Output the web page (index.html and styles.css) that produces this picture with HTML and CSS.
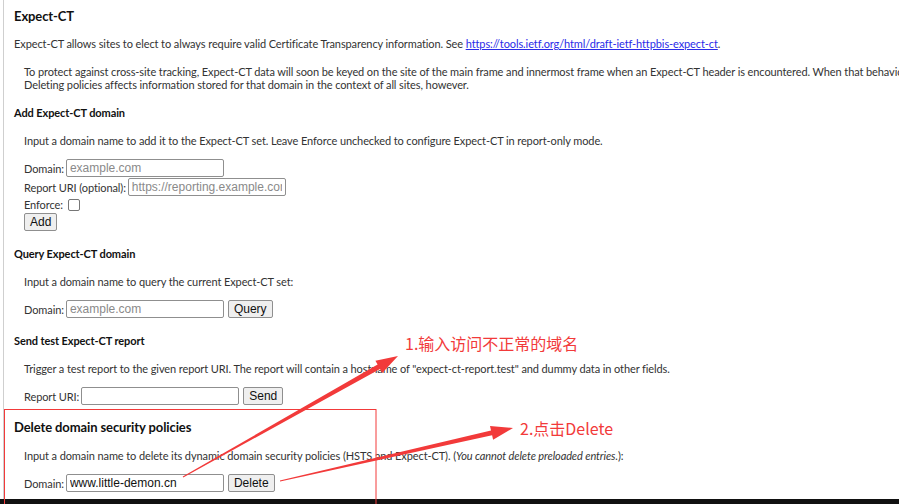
FILE: index.html
```html
<!DOCTYPE html>
<html>
<head>
<meta charset="utf-8">
<link rel="stylesheet" href="styles.css">
</head>
<body>
<div class="screen">
  <main class="frame">
    <h1 class="title">Expect-CT</h1>
    <p class="lead">Expect-CT allows sites to elect to always require valid Certificate Transparency information. See <a href="#">https://tools.ietf.org/html/draft-ietf-httpbis-expect-ct</a>.</p>
    <p class="note">To protect against cross-site tracking, Expect-CT data will soon be keyed on the site of the main frame and innermost frame when an Expect-CT header is encountered. When that behavior is enabled, queries and deletions will only affect the data stored for that domain in the context of the main frame.<br>Deleting policies affects information stored for that domain in the context of all sites, however.</p>

    <section class="block">
      <h2 class="sub">Add Expect-CT domain</h2>
      <p class="desc">Input a domain name to add it to the Expect-CT set. Leave Enforce unchecked to configure Expect-CT in report-only mode.</p>
      <div class="form">
        <div class="row">Domain: <input class="field" placeholder="example.com"></div>
        <div class="row">Report URI (optional): <input class="field" placeholder="https://reporting.example.com"></div>
        <div class="row check">Enforce: <span class="box"></span></div>
        <div class="row"><button class="btn">Add</button></div>
      </div>
    </section>

    <section class="block">
      <h2 class="sub">Query Expect-CT domain</h2>
      <p class="desc">Input a domain name to query the current Expect-CT set:</p>
      <div class="form">
        <div class="row">Domain: <input class="field" placeholder="example.com"> <button class="btn">Query</button></div>
      </div>
    </section>

    <section class="block">
      <h2 class="sub">Send test Expect-CT report</h2>
      <p class="desc">Trigger a test report to the given report URI. The report will contain a hostname of "expect-ct-report.test" and dummy data in other fields.</p>
      <div class="form">
        <div class="row">Report URI: <input class="field"> <button class="btn">Send</button></div>
      </div>
    </section>

    <section class="block del">
      <h2 class="big">Delete domain security policies</h2>
      <p class="desc">Input a domain name to delete its dynamic domain security policies (HSTS and Expect-CT). (<i>You cannot delete preloaded entries.</i>):</p>
      <div class="form">
        <div class="row">Domain: <input class="field filled" value="www.little-demon.cn"> <button class="btn">Delete</button></div>
      </div>
    </section>
  </main>
  <div class="taskbar"></div>

  <svg class="marks" width="899" height="504" viewBox="0 0 899 504">
    <rect x="4.5" y="409.5" width="371.5" height="110" fill="none" stroke="#f23a3a" stroke-width="1"/>
    <polygon fill="#f23a3a" points="183.25,477.44 380.0,369.0 382.2,372.9 398,356 375.4,360.7 377.6,364.6 182.75,476.56"/>
    <polygon fill="#f23a3a" points="280.11,481.49 492.10,435.32 493.10,439.71 513,428 490.00,426.05 491.00,430.44 279.89,480.51"/>
  </svg>
  <div class="label one">1.输入访问不正常的域名</div>
  <div class="label two">2.点击Delete</div>
</div>
</body>
</html>
```

FILE: styles.css
```css
html, body {
  margin: 0;
  padding: 0;
  background: #fff;
}
.screen {
  position: relative;
  width: 899px;
  height: 504px;
  overflow: hidden;
  display: flex;
  flex-direction: column;
  font-family: "Lato", "Noto Sans", sans-serif;
  font-size: 11px;
  letter-spacing: -0.1px;
  color: #333;
}
.frame {
  flex: 1;
  min-height: 0;
  margin-left: 3px;
  border-left: 1px solid #cfcfcf;
  padding: 8px 0 0 10px;
  white-space: nowrap;
}
.taskbar {
  height: 5px;
  background: #111;
}
.title {
  margin: 0;
  font-size: 13px;
  line-height: 16px;
  font-weight: 700;
  color: #111;
}
.lead {
  margin: 13px 0 0;
  line-height: 14px;
}
.lead a {
  color: #2b2be8;
}
.note {
  margin: 14px 0 0 10px;
  line-height: 13px;
  white-space: normal;
  width: 2000px;
}
.block {
  margin-top: 15px;
}
.block + .block {
  margin-top: 16px;
}
.sub {
  margin: 0;
  font-size: 11px;
  line-height: 14px;
  font-weight: 700;
  color: #111;
}
.big {
  margin: 0;
  font-size: 13px;
  line-height: 16px;
  font-weight: 700;
  color: #111;
}
.desc {
  margin: 14px 0 0 10px;
  line-height: 14px;
}
.form {
  margin: 11px 0 0 10px;
  display: flex;
  flex-direction: column;
  gap: 1px;
}
.row {
  display: flex;
  align-items: center;
  gap: 2px;
  height: 18px;
}
.check {
  height: 15px;
}
.field {
  box-sizing: border-box;
  width: 158px;
  height: 18px;
  margin: 0;
  padding: 1px 3px;
  border: 1px solid #8f8f8f;
  border-radius: 2px;
  font-family: "Liberation Sans", Arial, sans-serif;
  font-size: 12px;
  letter-spacing: 0;
  color: #111;
  background: #fff;
}
.field::placeholder {
  color: #8a8a8a;
}
.box {
  display: inline-block;
  box-sizing: border-box;
  width: 12px;
  height: 12px;
  margin-left: 3px;
  border: 1px solid #767676;
  border-radius: 2px;
  background: #fff;
}
.btn {
  box-sizing: border-box;
  height: 18px;
  margin: 0 0 0 2px;
  padding: 0 5px;
  border: 1px solid #8f8f8f;
  border-radius: 2px;
  background: #efefef;
  font-family: "Liberation Sans", Arial, sans-serif;
  font-size: 12px;
  letter-spacing: 0;
  color: #111;
}
.row > .btn:first-child {
  margin-left: 0;
}
.block.del {
  margin-top: 14px;
}
.marks {
  position: absolute;
  left: 0;
  top: 0;
  pointer-events: none;
}
.label {
  position: absolute;
  font-family: "Noto Sans CJK SC", "Noto Sans", sans-serif;
  font-size: 16px;
  line-height: 20px;
  letter-spacing: 0;
  color: #f23a3a;
  white-space: nowrap;
}
.one {
  left: 405px;
  top: 333px;
}
.two {
  left: 520px;
  top: 418px;
}
```
